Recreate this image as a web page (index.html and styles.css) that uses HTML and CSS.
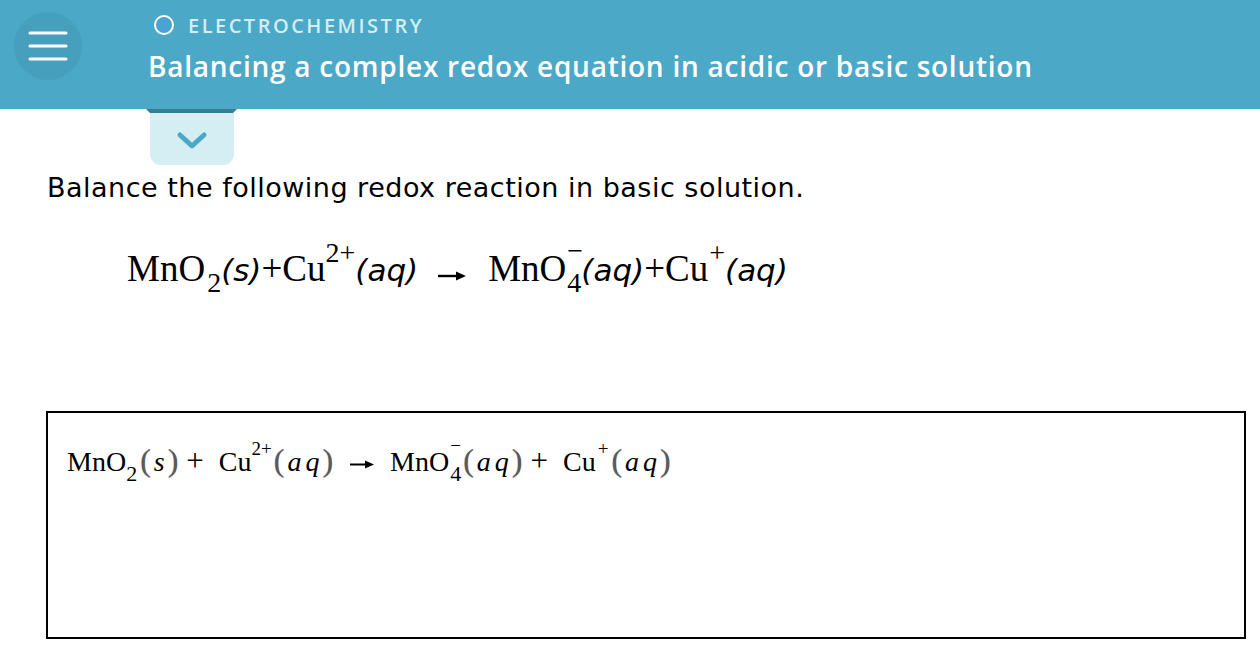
FILE: index.html
```html
<!DOCTYPE html>
<html>
<head>
<meta charset="utf-8">
<link rel="stylesheet" href="styles.css">
</head>
<body>
<header class="topbar">
  <div class="menu-btn">
    <svg width="40" height="30" viewBox="0 0 40 30"><g stroke="#fff" stroke-width="3" stroke-linecap="round"><line x1="2" y1="2" x2="38" y2="2"/><line x1="2" y1="15" x2="38" y2="15"/><line x1="2" y1="28" x2="38" y2="28"/></g></svg>
  </div>
  <div class="titles">
    <div class="topic"><span class="dot"></span>ELECTROCHEMISTRY</div>
    <div class="title">Balancing a complex redox equation in acidic or basic solution</div>
  </div>
</header>
<div class="tabwrap">
  <div class="tab">
    <div class="tab-edge"></div>
    <div class="tab-body">
      <svg width="32" height="20" viewBox="0 0 32 20"><polyline points="4,4 16,15 28,4" fill="none" stroke="#4ba8c6" stroke-width="5" stroke-linecap="round" stroke-linejoin="round"/></svg>
    </div>
  </div>
</div>
<main class="content">
  <p class="prompt">Balance the following redox reaction in basic solution.</p>
  <div class="eq1">
    <span class="chem">MnO</span><span class="sub">2</span><span class="phase">(s)</span><span class="chem">+Cu</span><span class="sup">2+</span><span class="phase">(aq)</span><svg class="arrow" width="28" height="10" viewBox="0 0 28 10"><line x1="0" y1="5" x2="21" y2="5" stroke="#000" stroke-width="2.4"/><polygon points="18,0.5 28,5 18,9.5" fill="#000"/></svg><span class="chem">MnO</span><span class="ion"><span class="bar">&#x2212;</span>4</span><span class="phase">(aq)</span><span class="chem">+Cu</span><span class="sup plus">+</span><span class="phase">(aq)</span>
  </div>
  <div class="answer">
    <div class="eq2">
      <span>MnO</span><span class="sub2">2</span><span class="par">(</span><i>s</i><span class="par">)</span><span class="op">+</span><span>Cu</span><span class="sup2">2+</span><span class="par">(</span><i>a</i><i>q</i><span class="par">)</span><svg class="arrow2" width="24" height="9" viewBox="0 0 24 9"><line x1="0" y1="4.5" x2="17" y2="4.5" stroke="#000" stroke-width="2"/><polygon points="15,0.5 24,4.5 15,8.5" fill="#000"/></svg><span>MnO</span><span class="ion2"><span class="bar2">&#x2212;</span>4</span><span class="par">(</span><i>a</i><i>q</i><span class="par">)</span><span class="op">+</span><span>Cu</span><span class="sup2 p2">+</span><span class="par">(</span><i>a</i><i>q</i><span class="par">)</span>
    </div>
  </div>
</main>
</body>
</html>
```

FILE: styles.css
```css
* { box-sizing: border-box; }
html, body { margin: 0; padding: 0; background: #fff; }
body { width: 1260px; height: 656px; overflow: hidden; font-family: "DejaVu Sans", sans-serif; }

.topbar {
  height: 109px;
  background: #4ba8c6;
  display: flex;
  align-items: flex-start;
}
.menu-btn {
  width: 68px; height: 68px;
  margin: 12px 0 0 14px;
  border-radius: 50%;
  background: #46a0bd;
  display: flex; align-items: center; justify-content: center;
}
.titles { margin-left: 66px; padding-top: 11px; }
.topic {
  font-family: "Open Sans", sans-serif;
  font-size: 20px;
  font-weight: 600;
  letter-spacing: 2.5px;
  color: #d3eef5;
  display: flex; align-items: center;
  margin-left: 6px;
  height: 28px;
}
.dot {
  width: 20px; height: 20px; border-radius: 50%;
  border: 2px solid #fff; background: #4aa3d2;
  margin-right: 14px;
}
.title {
  font-family: "Open Sans", sans-serif;
  font-size: 28px;
  font-weight: 600;
  letter-spacing: 0.75px;
  color: #fff;
  margin-top: 8px;
}

.tabwrap { padding-left: 146px; height: 56px; }
.tab { width: 91px; }
.tab-edge {
  height: 0;
  border-top: 4px solid #347f96;
  border-left: 4px solid transparent;
  border-right: 4px solid transparent;
}
.tab-body {
  margin: 0 3px 0 4px;
  height: 52px;
  background: #d5eef4;
  border-radius: 0 0 11px 11px;
  display: flex; justify-content: center; align-items: flex-start;
  padding-top: 18px;
}

.content { padding: 0 14px 0 46px; }
.prompt {
  margin: 8px 0 0 1px;
  font-size: 27px;
  letter-spacing: 0.5px;
  color: #000;
  line-height: 30px;
}
.eq1 {
  margin: 26px 0 0 81px;
  display: flex; align-items: baseline;
  height: 62px;
  padding-top: 18px;
  color: #000;
}
.chem { font-family: "Liberation Serif", serif; font-size: 37px; }
.phase { font-family: "DejaVu Sans", sans-serif; font-style: oblique; font-size: 31px; }
.sub { font-family: "Liberation Serif", serif; font-size: 28px; position: relative; top: 11px; margin-left: 2px; }
.sup { font-family: "Liberation Serif", serif; font-size: 28px; position: relative; top: -19px; }
.sup.plus { margin-left: 1px; }
.arrow { align-self: center; margin: 14px 22px 0 20px; }
.ion { font-family: "Liberation Serif", serif; font-size: 28px; position: relative; top: 11px; margin-left: 1px; }
.bar { position: absolute; left: 0; right: 0; text-align: center; top: -32px; }

.answer {
  margin-top: 120px;
  width: 1200px; height: 228px;
  border: 2px solid #000;
  padding: 29px 0 0 19px;
}
.eq2 {
  display: flex; align-items: baseline;
  font-family: "Liberation Serif", serif;
  font-size: 28px;
  color: #000;
}
.eq2 i { font-style: italic; font-size: 28px; margin: 0 2px; }
.par { color: #5a5a5a; font-size: 32px; margin: 0 1px; text-shadow: 0 0 1px #999; }
.op { margin: 0 15px 0 7px; font-size: 31px; }
.sub2 { font-size: 22px; position: relative; top: 10px; margin-right: 2px; }
.sup2 { font-size: 19px; position: relative; top: -16px; margin-right: 1px; }
.sup2.p2 { margin-left: 2px; margin-right: 2px; }
.arrow2 { align-self: center; margin: 8px 16px 0 16px; }
.ion2 { font-size: 22px; position: relative; top: 10px; margin-right: 1px; margin-left: 1px; }
.bar2 { position: absolute; left: 0; right: 0; text-align: center; top: -26px; font-size: 19px; }
```
